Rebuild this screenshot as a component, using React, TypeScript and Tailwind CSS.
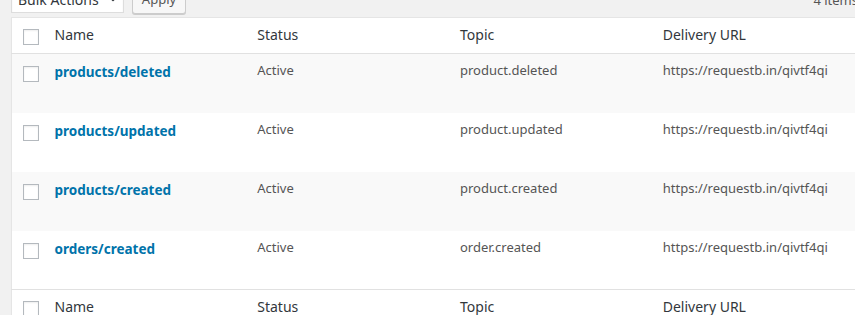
import { ChevronDown } from "lucide-react";

const hooks = [
  { name: "products/deleted", topic: "product.deleted" },
  { name: "products/updated", topic: "product.updated" },
  { name: "products/created", topic: "product.created" },
  { name: "orders/created", topic: "order.created" },
];

function Check() {
  return <span className="block w-4 h-4 border border-[#b4b9be] bg-white shadow-[inset_0_1px_2px_rgba(0,0,0,0.07)]" />;
}

function HeadRow() {
  return (
    <tr className="text-[14px] text-[#32373c]">
      <td className="w-[33px] pl-[11px] pt-[11px] pb-[8px] align-top">
        <Check />
      </td>
      <th className="font-normal text-left px-[10px] pt-[7px] pb-[9px] leading-[19px]">Name</th>
      <th className="font-normal text-left px-[10px] pt-[7px] pb-[9px] leading-[19px]">Status</th>
      <th className="font-normal text-left px-[10px] pt-[7px] pb-[9px] leading-[19px]">Topic</th>
      <th className="font-normal text-left px-[10px] pt-[7px] pb-[9px] leading-[19px]">Delivery URL</th>
    </tr>
  );
}

export default function App() {
  return (
    <div className="h-[315px] overflow-hidden bg-[#f1f1f1] font-['Noto_Sans',sans-serif]">
      <div className="ml-[11px] -mt-[15px] flex items-start justify-between h-[29px]">
        <div className="flex gap-2">
          <div className="w-[113px] h-[28px] bg-white border border-[#ddd] shadow-[inset_0_1px_2px_rgba(0,0,0,0.07)] flex items-center justify-between pl-[6px] pr-[4px] text-[14px] text-[#32373c]">
            <span>Bulk Actions</span>
            <ChevronDown className="w-3 h-3" strokeWidth={3} />
          </div>
          <div className="w-[54px] h-[29px] bg-[#f7f7f7] border border-[#ccc] rounded-[3px] shadow-[0_1px_0_#ccc] flex items-center justify-center text-[13px] text-[#555]">
            Apply
          </div>
        </div>
        <span className="text-[13px] text-[#555] pt-[6px] -mr-[3px]">4 items</span>
      </div>
      <div className="ml-[11px] mt-[3px] w-[845px]">
        <table className="w-full table-fixed border border-[#e5e5e5] border-collapse bg-white shadow-[0_1px_1px_rgba(0,0,0,0.04)]">
          <colgroup>
            <col className="w-[33px]" />
            <col />
            <col />
            <col />
            <col />
          </colgroup>
          <thead className="border-b border-[#e1e1e1]">
            <HeadRow />
          </thead>
          <tbody>
            {hooks.map((h, i) => (
              <tr key={h.name} className={`h-[59px] align-top ${i % 2 === 0 ? "bg-[#f9f9f9]" : "bg-white"}`}>
                <td className="pl-[11px] pt-[12px]">
                  <Check />
                </td>
                <td className="px-[10px] pt-[5px]">
                  <span className="text-[13.5px] font-bold text-[#0073aa] leading-[19px]">{h.name}</span>
                </td>
                <td className="px-[10px] pt-[7px] text-[13px] text-[#555] leading-[19px]">Active</td>
                <td className="px-[10px] pt-[7px] text-[13px] text-[#555] leading-[19px]">{h.topic}</td>
                <td className="px-[10px] pt-[7px] text-[13px] text-[#555] leading-[19px]">https://requestb.in/qivtf4qi</td>
              </tr>
            ))}
          </tbody>
          <tfoot className="border-t border-[#e1e1e1]">
            <HeadRow />
          </tfoot>
        </table>
      </div>
    </div>
  );
}
